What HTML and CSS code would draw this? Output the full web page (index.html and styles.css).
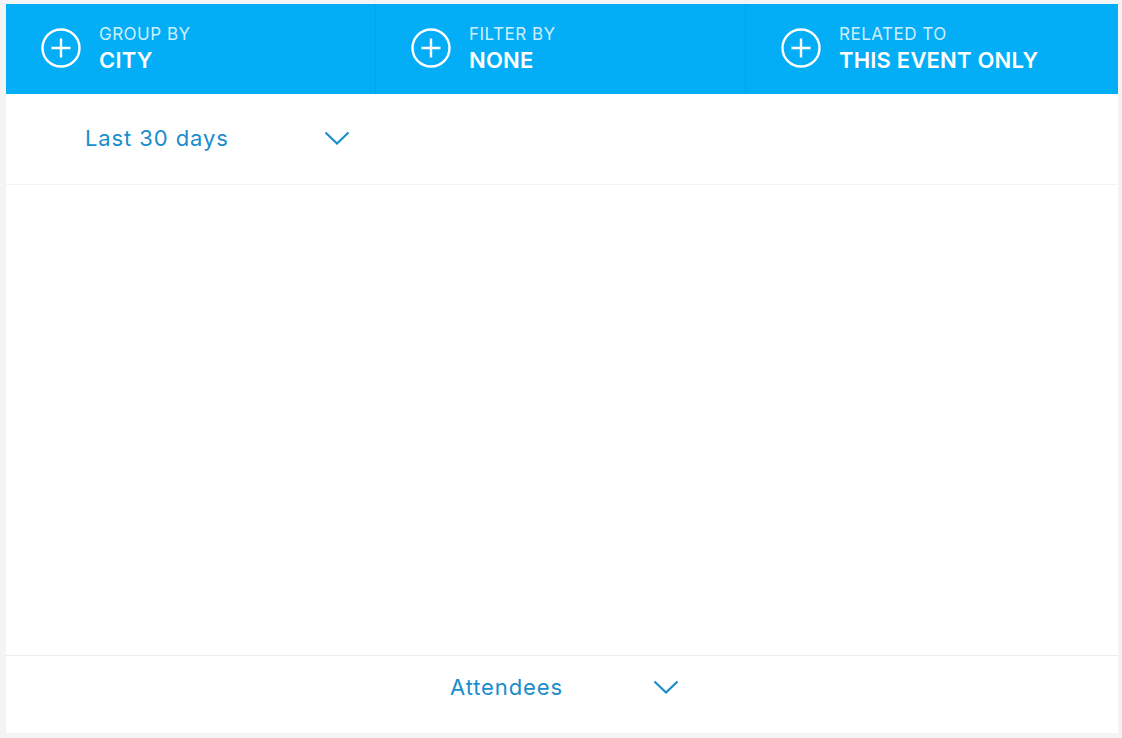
FILE: index.html
```html
<!DOCTYPE html>
<html>
<head>
<meta charset="utf-8">
<link rel="stylesheet" href="styles.css">
</head>
<body>
<div class="card">
  <div class="toolbar">
    <div class="tool">
      <svg class="plus" viewBox="0 0 40 40" width="40" height="40"><circle cx="20" cy="20" r="18.5" fill="none" stroke="#fff" stroke-width="2.4"/><path d="M20 10.5V29.5M10.5 20H29.5" stroke="#fff" stroke-width="2.4" fill="none"/></svg>
      <div class="tool-text"><div class="tool-label">GROUP BY</div><div class="tool-value">CITY</div></div>
    </div>
    <div class="tool">
      <svg class="plus" viewBox="0 0 40 40" width="40" height="40"><circle cx="20" cy="20" r="18.5" fill="none" stroke="#fff" stroke-width="2.4"/><path d="M20 10.5V29.5M10.5 20H29.5" stroke="#fff" stroke-width="2.4" fill="none"/></svg>
      <div class="tool-text"><div class="tool-label">FILTER BY</div><div class="tool-value">NONE</div></div>
    </div>
    <div class="tool last">
      <svg class="plus" viewBox="0 0 40 40" width="40" height="40"><circle cx="20" cy="20" r="18.5" fill="none" stroke="#fff" stroke-width="2.4"/><path d="M20 10.5V29.5M10.5 20H29.5" stroke="#fff" stroke-width="2.4" fill="none"/></svg>
      <div class="tool-text"><div class="tool-label">RELATED TO</div><div class="tool-value">THIS EVENT ONLY</div></div>
    </div>
  </div>
  <div class="range-row">
    <div class="select range">
      <span class="select-text">Last 30 days</span>
      <svg class="chev" viewBox="0 0 26 14" width="26" height="14"><path d="M1.5 1.5L13 12.5L24.5 1.5" fill="none" stroke="#1a8dcc" stroke-width="2.2"/></svg>
    </div>
  </div>
  <div class="chart"></div>
  <div class="metric-row">
    <div class="select metric">
      <span class="select-text">Attendees</span>
      <svg class="chev" viewBox="0 0 26 14" width="26" height="14"><path d="M1.5 1.5L13 12.5L24.5 1.5" fill="none" stroke="#1a8dcc" stroke-width="2.2"/></svg>
    </div>
  </div>
</div>
</body>
</html>
```

FILE: styles.css
```css
html, body {
  margin: 0;
  padding: 0;
}
body {
  background: #f4f4f4;
  font-family: Inter, "Liberation Sans", Arial, sans-serif;
  width: 1122px;
  height: 738px;
  overflow: hidden;
}
.card {
  margin: 4px 0 0 6px;
  width: 1112px;
  height: 729px;
  background: #fff;
  display: flex;
  flex-direction: column;
}
.toolbar {
  height: 90px;
  background: #03aef6;
  display: grid;
  grid-template-columns: 370px 370px 372px;
}
.tool {
  display: flex;
  align-items: center;
  padding-left: 35px;
  gap: 18px;
  border-right: 1px solid rgba(0, 60, 120, 0.07);
  color: #fff;
}
.tool.last {
  border-right: none;
}
.plus {
  flex: none;
  margin-top: -2px;
}
.tool-text {
  display: flex;
  flex-direction: column;
  margin-top: 0;
}
.tool-label {
  font-size: 17px;
  line-height: 20px;
  color: rgba(255, 255, 255, 0.82);
  letter-spacing: 0.5px;
}
.tool-value {
  font-size: 22px;
  line-height: 30px;
  margin-top: 1px;
  font-weight: 600;
  letter-spacing: 0.2px;
}
.range-row {
  height: 90px;
  border-bottom: 1px solid #f4f3ec;
  display: flex;
  align-items: center;
}
.select {
  display: flex;
  align-items: center;
  color: #1a8dcc;
  font-size: 22px;
  letter-spacing: 0.9px;
}
.range {
  margin-left: 79px;
  width: 265px;
  justify-content: space-between;
  margin-top: -2px;
}
.chev {
  flex: none;
}
.chart {
  height: 470px;
  border-bottom: 1px solid #eeefe9;
}
.metric-row {
  flex: 1;
  display: flex;
  align-items: center;
  justify-content: flex-start;
}
.metric {
  margin-left: 444px;
  width: 229px;
  justify-content: space-between;
  margin-top: -16px;
}
```
